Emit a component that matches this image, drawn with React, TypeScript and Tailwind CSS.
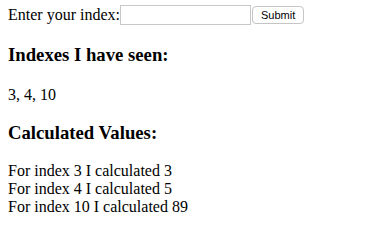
import React from "react";

export default function App() {
  return (
    <div className="px-2 pt-[5px] pb-2 font-['Liberation_Serif',serif] text-base leading-[18px] text-black bg-white min-h-[248px]">
      <form className="flex items-center h-[20px]" onSubmit={(e) => e.preventDefault()}>
        <label>Enter your index:</label>
        <input className="w-[131px] h-[20px] border border-[#c8c8c8] bg-white px-1 outline-none" />
        <button
          type="button"
          className="ml-[1px] h-[18px] px-[8px] rounded-[4px] border border-[#c5c5c5] bg-white font-['Liberation_Sans',sans-serif] text-[11px] leading-[16px]"
        >
          Submit
        </button>
      </form>
      <h3 className="text-[18.72px] leading-[22px] font-bold mt-[19px] mb-[20px]">Indexes I have seen:</h3>
      <div>3, 4, 10</div>
      <h3 className="text-[18.72px] leading-[22px] font-bold mt-[18px] mb-[18px]">Calculated Values:</h3>
      <div>For index 3 I calculated 3</div>
      <div>For index 4 I calculated 5</div>
      <div>For index 10 I calculated 89</div>
    </div>
  );
}
